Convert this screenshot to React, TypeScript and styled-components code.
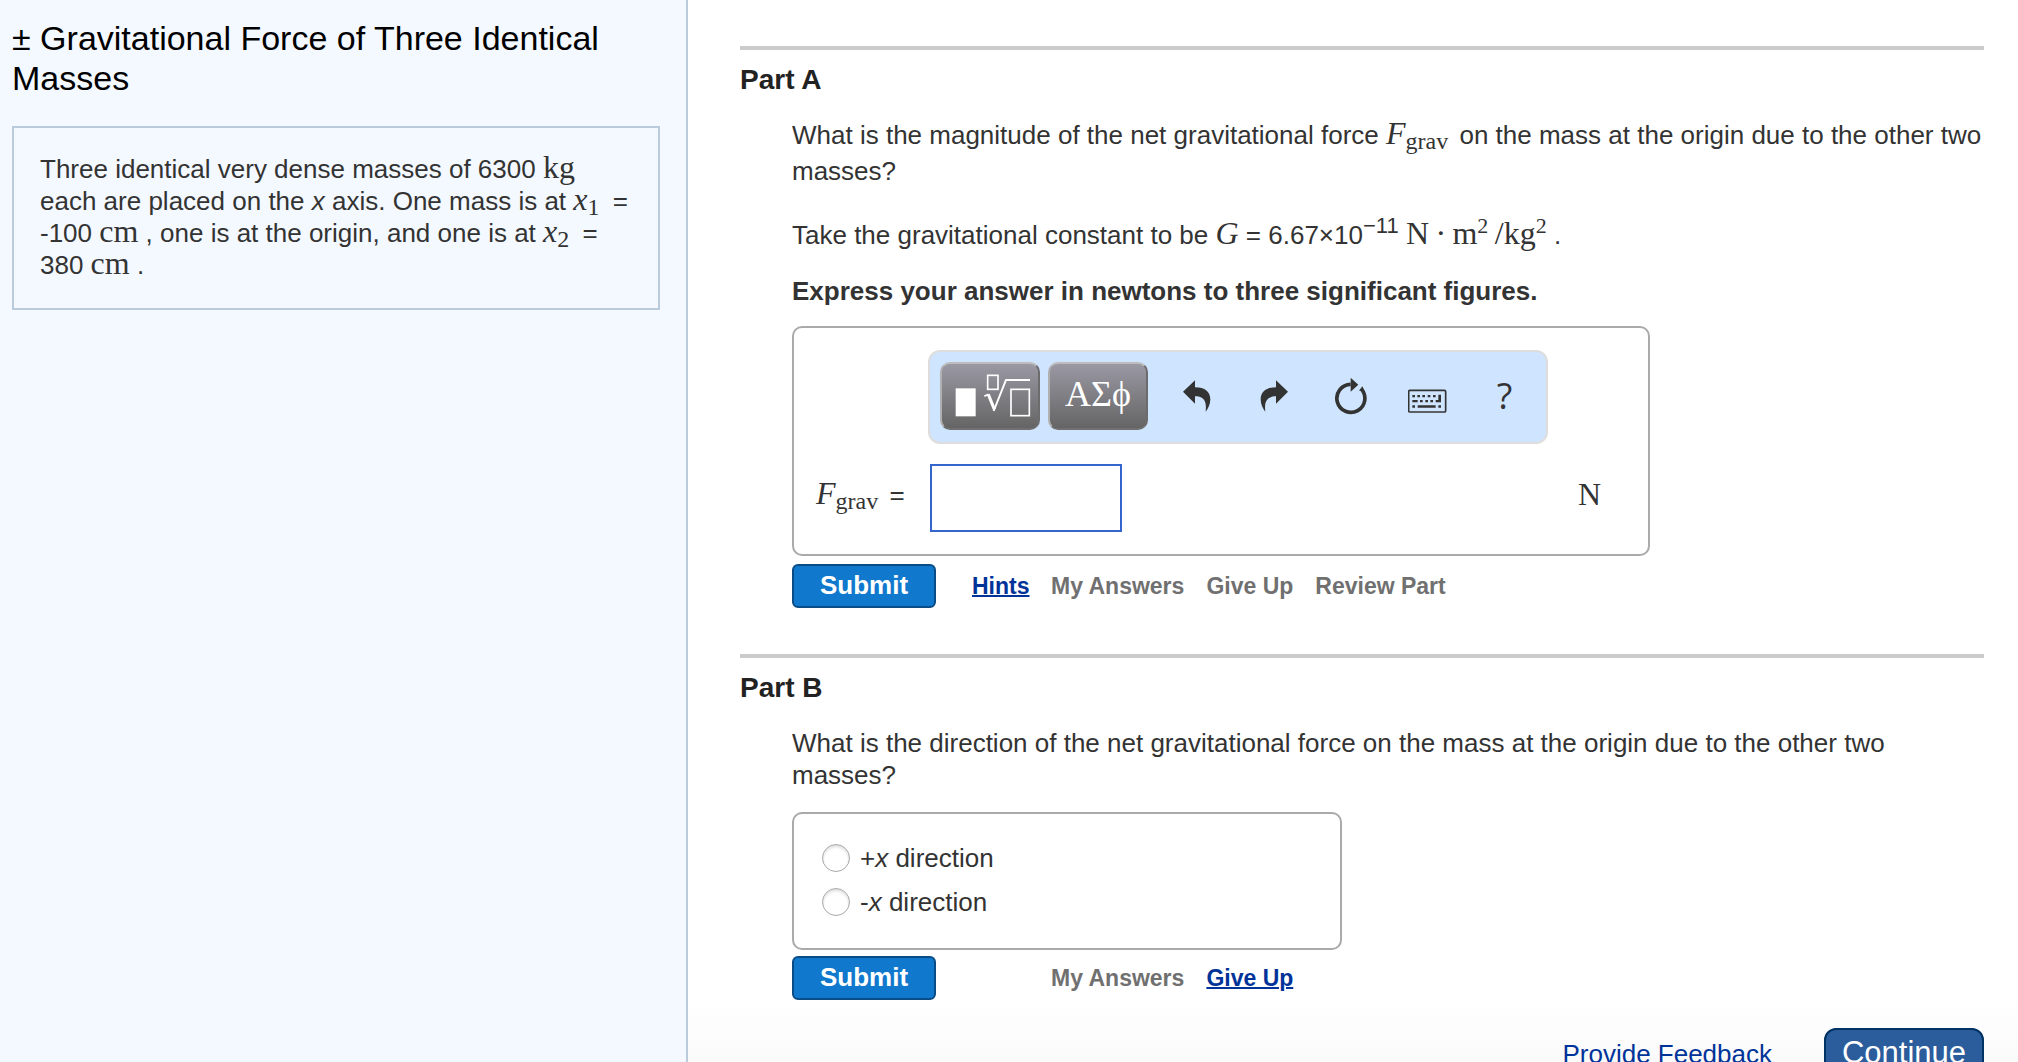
import React from "react";
import styled, { createGlobalStyle } from "styled-components";

const SANS = '"Liberation Sans", Arial, sans-serif';
const SERIF = '"Liberation Serif", "Times New Roman", serif';

const GlobalStyle = createGlobalStyle`
  * { box-sizing: border-box; }
  body {
    margin: 0;
    background: #fff;
    color: #333;
    font-family: ${SANS};
    font-size: 26px;
    line-height: 32px;
  }
  button, input { font-family: inherit; }
`;

const Shell = styled.div`
  display: grid;
  grid-template-columns: 688px minmax(0, 1fr);
  height: 100vh;
`;

const Sidebar = styled.aside`
  padding: 18px 26px 18px 12px;
  background: #f4f9ff;
  border-right: 2px solid #bacbdc;
  overflow-y: auto;
  scrollbar-width: none;
`;

const Title = styled.h1`
  margin: 0 0 28px;
  color: #000;
  font-size: 34px;
  font-weight: 400;
  line-height: 40px;
`;

const Intro = styled.div`
  padding: 25px 26px 27px;
  border: 2px solid #bacbdc;
`;

const Content = styled.main`
  padding: 46px 34px 0 52px;
  background: linear-gradient(#fff 0, #fff calc(100% - 60px), #fafafa 100%);
  overflow-y: auto;
  scrollbar-width: none;
`;

const Part = styled.section`
  padding-top: 14px;
  border-top: 4px solid #cbcbcb;
  margin-bottom: 46px;

  &:last-of-type { margin-bottom: 28px; }
`;

const PartTitle = styled.h2`
  margin: 0;
  color: #222;
  font-size: 28px;
  line-height: 32px;
`;

const PartBody = styled.div<{ $top: number }>`
  padding: ${(p) => p.$top}px 0 0 52px;
`;

const Text = styled.p<{ $line?: number; $after: number }>`
  margin: 0 0 ${(p) => p.$after}px;
  line-height: ${(p) => p.$line ?? 32}px;
`;

const MathText = styled.span`
  font-family: ${SERIF};
  font-size: 32px;
  line-height: 0;
`;

const Variable = styled(MathText)`
  font-style: italic;
`;

const Sub = styled.sub<{ $after?: number }>`
  margin-right: ${(p) => p.$after ?? 4}px;
  font-family: ${SERIF};
  font-size: 24px;
  line-height: 0;
  vertical-align: -5px;
`;

const Sup = styled.sup`
  font-size: 22px;
  line-height: 0;
  vertical-align: 11px;
`;

const AnswerBox = styled.div`
  display: grid;
  grid-template-columns: 112px 620px auto;
  row-gap: 20px;
  width: 858px;
  padding: 22px;
  border: 2px solid #aaa;
  border-radius: 10px;
`;

const Toolbar = styled.div`
  grid-column: 2;
  display: flex;
  padding: 10px 0 12px 10px;
  background: #cfe5ff;
  border: 2px solid #ddd;
  border-radius: 12px;
`;

const PaletteButton = styled.button`
  display: flex;
  align-items: center;
  justify-content: center;
  width: 100px;
  height: 68px;
  margin-right: 8px;
  padding: 0 0 4px;
  color: #fff;
  background: linear-gradient(#9a98a3, #656565);
  border: 2px solid;
  border-color: #bcbcbc #6c6c6c #707070 #b0b0b0;
  border-radius: 10px;
  font-family: ${SERIF};
  font-size: 36px;

  svg { display: block; margin-bottom: -4px; }
`;

const Tools = styled.div`
  display: flex;
  padding-left: 2px;
`;

const ToolButton = styled.button`
  display: flex;
  align-items: center;
  justify-content: center;
  width: 77px;
  height: 68px;
  padding: 0;
  color: #333;
  background: none;
  border: 0;

  svg { display: block; }
`;

const Help = styled.span`
  font-family: "Open Sans", sans-serif;
  font-size: 36px;
  line-height: 40px;
`;

const FieldLabel = styled.label`
  grid-column: 1;
  align-self: center;
  padding-bottom: 6px;
  white-space: nowrap;
`;

const Field = styled.input`
  grid-column: 2;
  width: 192px;
  height: 68px;
  margin-left: 2px;
  padding: 0 12px;
  background: #fff;
  border: 2px solid #3366cc;
  font-size: 26px;
  outline: none;
`;

const Unit = styled.div`
  align-self: center;
  padding: 0 0 4px 30px;
`;

const Actions = styled.div<{ $top: number }>`
  display: flex;
  align-items: center;
  gap: 22px;
  margin-top: ${(p) => p.$top}px;
`;

const Submit = styled.button`
  width: 144px;
  height: 44px;
  margin-right: 14px;
  padding: 0 0 2px;
  color: #fff;
  background: #1079cd;
  border: 2px solid #0a4c86;
  border-radius: 6px;
  font-size: 26px;
  font-weight: 700;
`;

const HintSlot = styled.div`
  width: 57px;
`;

const ActionLink = styled.a`
  display: block;
  color: #003399;
  font-size: 23px;
  font-weight: 700;
  text-decoration: underline;
  text-decoration-thickness: 2px;
  white-space: nowrap;
`;

const InactiveAction = styled.button`
  padding: 0;
  color: #707070;
  background: none;
  border: 0;
  font-size: 23px;
  font-weight: 700;
  line-height: 32px;
  white-space: nowrap;
`;

const Choices = styled.div`
  display: flex;
  flex-direction: column;
  gap: 16px;
  width: 550px;
  padding: 30px 28px 32px;
  border: 2px solid #aaa;
  border-radius: 10px;
`;

const Choice = styled.label`
  display: flex;
  align-items: center;
  gap: 10px;
  height: 28px;
`;

const Radio = styled.input`
  appearance: none;
  width: 28px;
  height: 28px;
  margin: 0;
  background: #fff;
  border: 1px solid #a9a9a9;
  border-radius: 50%;
  box-shadow: inset 0 2px 3px #ddd;

  &:checked { background: radial-gradient(#333 0 5px, #fff 6px); }
`;

const Footer = styled.footer`
  display: flex;
  align-items: center;
  justify-content: flex-end;
  gap: 52px;
`;

const FeedbackLink = styled.a`
  color: #003399;
  text-decoration: none;
`;

const Continue = styled.button`
  width: 160px;
  height: 52px;
  padding: 0 0 2px;
  color: #fff;
  background: #2b5c9b;
  border: 2px solid #003263;
  border-radius: 12px;
  font-size: 31px;
`;

const TemplateIcon = () => (
  <svg width="96" height="64" viewBox="0 0 288 192" fill="none" stroke="#fff" strokeWidth="5" aria-hidden="true">
    <rect x="41" y="73" width="60" height="84" fill="#fff" stroke="none" />
    <rect x="137" y="34" width="31" height="42" />
    <path d="M127 97 139 91" />
    <path d="M139 91 157 136" strokeWidth="9" />
    <path d="M155 141 192 48H264" strokeWidth="6" />
    <rect x="207" y="76" width="55" height="79" />
  </svg>
);

const UndoIcon = ({ flipped }: { flipped?: boolean }) => (
  <svg width="32" height="40" viewBox="0 0 96 120" fill="currentColor" aria-hidden="true">
    <path
      transform={flipped ? "matrix(-1 0 0 1 96 0)" : undefined}
      d="M6 47 42 13V34C72 34 88 48 88 70C88 86 81 98 74 107C77 84 74 61 42 61V83Z"
    />
  </svg>
);

const ResetIcon = () => (
  <svg width="32" height="40" viewBox="0 0 96 120" aria-hidden="true">
    <path d="M47 25A42 42 0 1 0 78 38" fill="none" stroke="currentColor" strokeWidth="11" />
    <path d="M47 5 70 26 47 47Z" fill="currentColor" />
    <path d="M72 44 82 31 88 44Z" fill="currentColor" />
  </svg>
);

const KeyboardIcon = () => (
  <svg width="40" height="40" viewBox="0 0 120 120" fill="currentColor" aria-hidden="true">
    <rect x="2" y="43" width="111" height="65" rx="4" fill="none" stroke="currentColor" strokeWidth="5" />
    <path d="M13 57h8v7h-8zM28 57h8v7h-8zM43 57h8v7h-8zM59 57h8v7h-8zM75 57h8v7h-8z" />
    <path d="M91 56h8v23H83v-7h8z" />
    <path d="M13 72h16v7H13zM36 72h8v7h-8zM52 72h8v7h-8zM67 72h8v7h-8z" />
    <path d="M13 88h8v7h-8zM29 88h54v7H29zM91 88h8v7h-8z" />
  </svg>
);

const Force = () => (
  <>
    <Variable>F</Variable>
    <Sub>grav</Sub>
  </>
);

export default function App() {
  return (
    <>
      <GlobalStyle />
      <Shell>
        <Sidebar>
          <Title>± Gravitational Force of Three Identical Masses</Title>
          <Intro>
            Three identical very dense masses of 6300 <MathText>kg</MathText> each are placed on the <i>x</i> axis. One
            mass is at <Variable>x</Variable>
            <Sub $after={6}>1</Sub> = -100 <MathText>cm</MathText> , one is at the origin, and one is at{" "}
            <Variable>x</Variable>
            <Sub $after={6}>2</Sub> = 380 <MathText>cm</MathText> .
          </Intro>
        </Sidebar>

        <Content>
          <Part>
            <PartTitle>Part A</PartTitle>
            <PartBody $top={21}>
              <Text $line={36} $after={30}>
                What is the magnitude of the net gravitational force <Force /> on the mass at the origin due to the
                other two masses?
              </Text>
              <Text $after={24}>
                Take the gravitational constant to be <Variable>G</Variable> = 6.67×10<Sup>−11</Sup>{" "}
                <MathText>
                  N{"\u2009"}·{"\u2009"}m<Sup>2</Sup>
                  {"\u2009"}/kg<Sup>2</Sup>
                </MathText>{" "}
                .
              </Text>
              <Text $after={19}>
                <b>Express your answer in newtons to three significant figures.</b>
              </Text>
              <AnswerBox>
                <Toolbar>
                  <PaletteButton type="button" aria-label="Templates">
                    <TemplateIcon />
                  </PaletteButton>
                  <PaletteButton type="button">ΑΣϕ</PaletteButton>
                  <Tools>
                    <ToolButton type="button" aria-label="Undo">
                      <UndoIcon />
                    </ToolButton>
                    <ToolButton type="button" aria-label="Redo">
                      <UndoIcon flipped />
                    </ToolButton>
                    <ToolButton type="button" aria-label="Reset">
                      <ResetIcon />
                    </ToolButton>
                    <ToolButton type="button" aria-label="Keyboard shortcuts">
                      <KeyboardIcon />
                    </ToolButton>
                    <ToolButton type="button" aria-label="Help">
                      <Help>?</Help>
                    </ToolButton>
                  </Tools>
                </Toolbar>
                <FieldLabel htmlFor="force">
                  <Force /> =
                </FieldLabel>
                <Field id="force" type="text" />
                <Unit>
                  <MathText>N</MathText>
                </Unit>
              </AnswerBox>
              <Actions $top={8}>
                <Submit type="button">Submit</Submit>
                <HintSlot>
                  <ActionLink href="#hints">Hints</ActionLink>
                </HintSlot>
                <InactiveAction disabled>My Answers</InactiveAction>
                <InactiveAction disabled>Give Up</InactiveAction>
                <InactiveAction disabled>Review Part</InactiveAction>
              </Actions>
            </PartBody>
          </Part>

          <Part>
            <PartTitle>Part B</PartTitle>
            <PartBody $top={23}>
              <Text $after={21}>
                What is the direction of the net gravitational force on the mass at the origin due to the other two
                masses?
              </Text>
              <Choices>
                <Choice>
                  <Radio type="radio" name="direction" value="plus" />
                  <span>
                    +<i>x</i> direction
                  </span>
                </Choice>
                <Choice>
                  <Radio type="radio" name="direction" value="minus" />
                  <span>
                    -<i>x</i> direction
                  </span>
                </Choice>
              </Choices>
              <Actions $top={6}>
                <Submit type="button">Submit</Submit>
                <HintSlot />
                <InactiveAction disabled>My Answers</InactiveAction>
                <ActionLink href="#give-up">Give Up</ActionLink>
              </Actions>
            </PartBody>
          </Part>

          <Footer>
            <FeedbackLink href="#feedback">Provide Feedback</FeedbackLink>
            <Continue type="button">Continue</Continue>
          </Footer>
        </Content>
      </Shell>
    </>
  );
}
